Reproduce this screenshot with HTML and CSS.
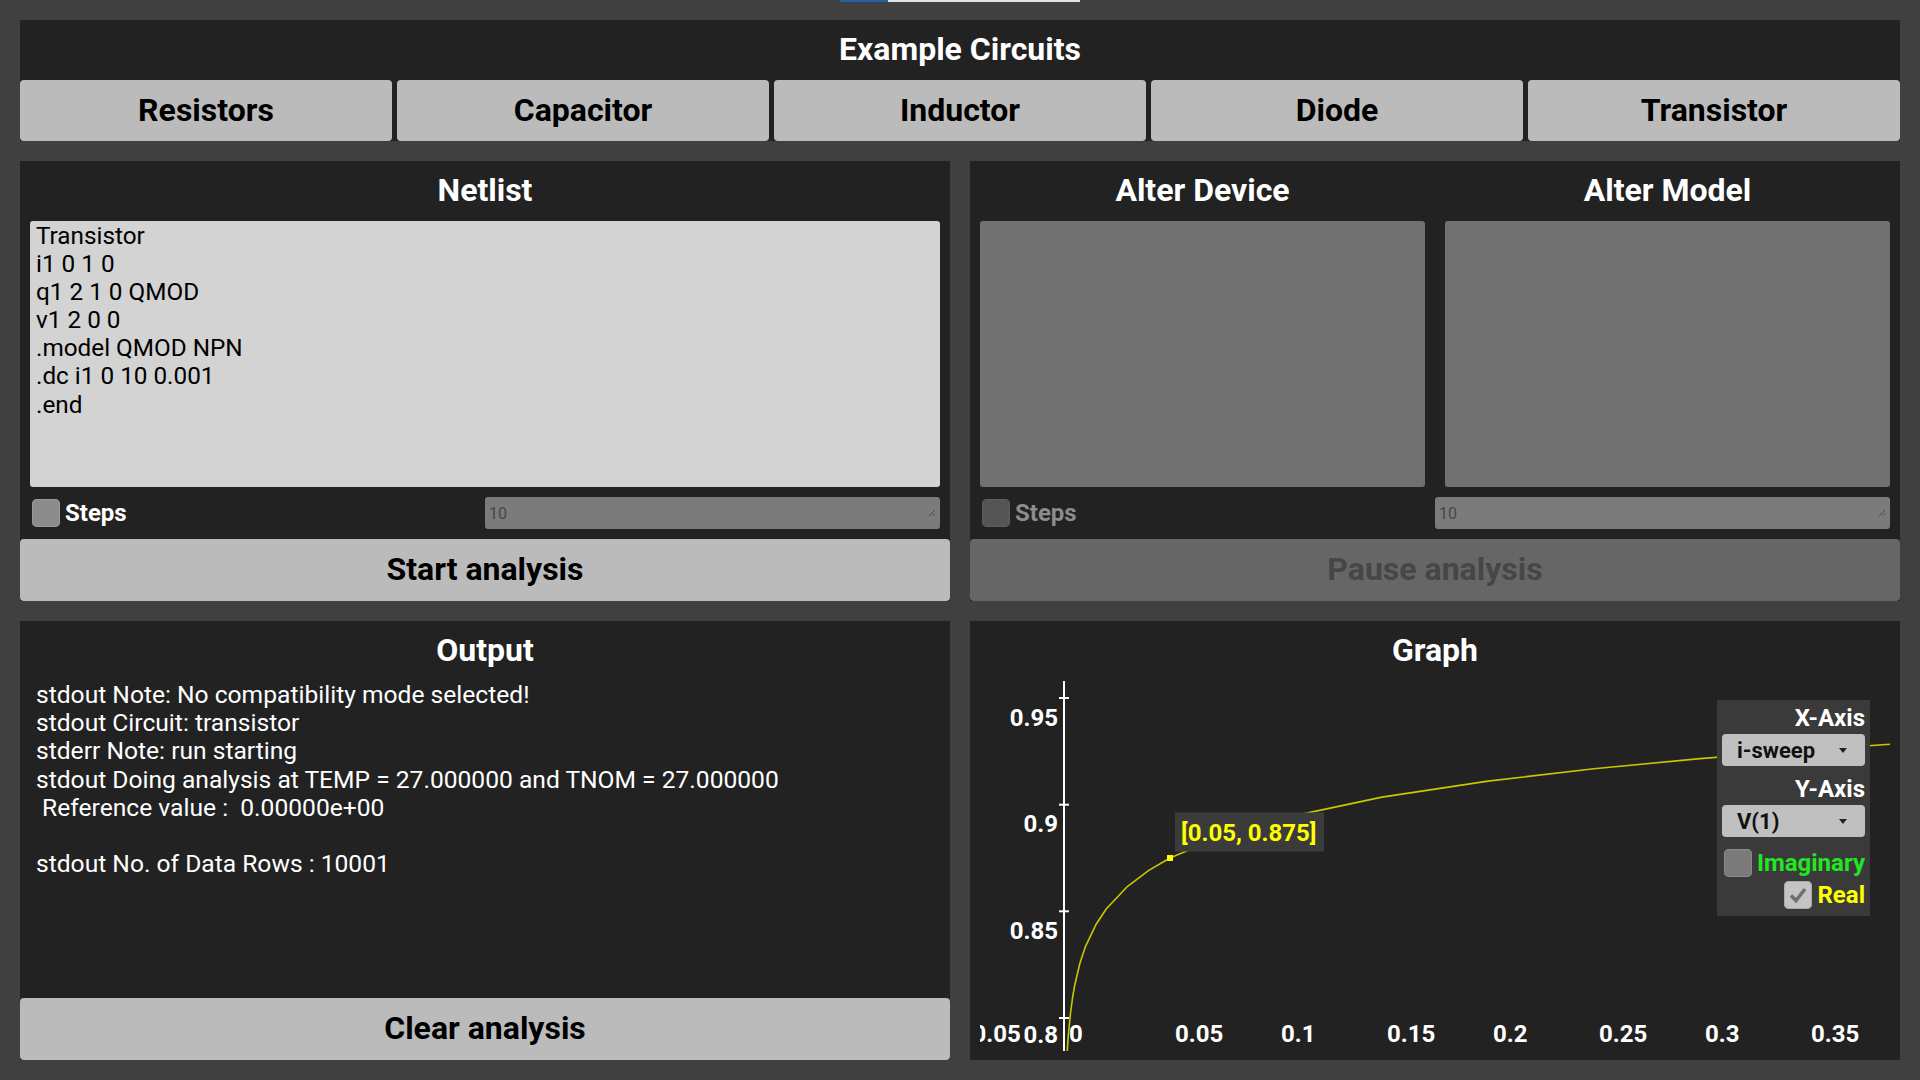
FILE: index.html
```html
<!DOCTYPE html>
<html lang="en">
<head>
  <meta charset="UTF-8">
  <title>Circuit Simulator</title>
  <link rel="stylesheet" href="styles.css">
</head>
<body>

  <div class="loader"><div class="loader-bar"></div></div>

  <main class="app">
    <section class="panel examples">
      <h2 class="panel-title">Example Circuits</h2>
      <div class="example-buttons">
        <button class="btn">Resistors</button>
        <button class="btn">Capacitor</button>
        <button class="btn">Inductor</button>
        <button class="btn">Diode</button>
        <button class="btn">Transistor</button>
      </div>
    </section>

    <div class="row">
      <section class="panel netlist">
        <h2 class="panel-title">Netlist</h2>
        <textarea class="netlist-text" spellcheck="false">Transistor
i1 0 1 0
q1 2 1 0 QMOD
v1 2 0 0
.model QMOD NPN
.dc i1 0 10 0.001
.end</textarea>
        <div class="steps-row">
          <label class="steps"><span class="check"></span>Steps</label>
          <div class="steps-input">
            <span>10</span>
            <svg class="grip" width="8" height="8" viewBox="0 0 8 8"><path d="M7 1 L1 7 M7 4.5 L4.5 7" stroke="#4a4a4a" stroke-width="1"/></svg>
          </div>
        </div>
        <button class="btn btn-wide">Start analysis</button>
      </section>

      <section class="panel alter">
        <div class="alter-cols">
          <div class="alter-col">
            <h2 class="panel-title">Alter Device</h2>
            <div class="alter-box"></div>
          </div>
          <div class="alter-col">
            <h2 class="panel-title">Alter Model</h2>
            <div class="alter-box"></div>
          </div>
        </div>
        <div class="steps-row">
          <label class="steps"><span class="check"></span>Steps</label>
          <div class="steps-input">
            <span>10</span>
            <svg class="grip" width="8" height="8" viewBox="0 0 8 8"><path d="M7 1 L1 7 M7 4.5 L4.5 7" stroke="#4a4a4a" stroke-width="1"/></svg>
          </div>
        </div>
        <button class="btn btn-wide btn-disabled">Pause analysis</button>
      </section>
    </div>

    <div class="row bottom">
      <section class="panel output">
        <h2 class="panel-title">Output</h2>
        <pre class="log">stdout Note: No compatibility mode selected!
stdout Circuit: transistor
stderr Note: run starting
stdout Doing analysis at TEMP = 27.000000 and TNOM = 27.000000
 Reference value :  0.00000e+00

stdout No. of Data Rows : 10001</pre>
        <button class="btn btn-wide">Clear analysis</button>
      </section>

      <section class="panel graph">
        <h2 class="panel-title">Graph</h2>
        <div class="plot">
          <svg class="plot-svg" width="910" height="370" viewBox="0 0 910 370">
            <line x1="84" y1="0" x2="84" y2="370" stroke="#fff" stroke-width="2"/>
            <g stroke="#fff" stroke-width="2">
              <line x1="79" y1="17" x2="89" y2="17"/>
              <line x1="79" y1="123.7" x2="89" y2="123.7"/>
              <line x1="79" y1="230.3" x2="89" y2="230.3"/>
              <line x1="79" y1="337" x2="89" y2="337"/>
            </g>
            <g class="tick-label" text-anchor="end">
              <text x="78" y="45">0.95</text>
              <text x="78" y="151">0.9</text>
              <text x="78" y="257.5">0.85</text>
              <text x="78" y="362">0.8</text>
            </g>
            <g class="tick-label">
              <text x="-17" y="361">-0.05</text>
              <text x="89" y="361">0</text>
              <text x="195" y="361">0.05</text>
              <text x="301" y="361">0.1</text>
              <text x="407" y="361">0.15</text>
              <text x="513" y="361">0.2</text>
              <text x="619" y="361">0.25</text>
              <text x="725" y="361">0.3</text>
              <text x="831" y="361">0.35</text>
            </g>
            <polyline class="curve" points="86.1,394 86.5,383.8 87.4,367.9 88.2,355.5 90.4,333 92.5,317.1 94.6,304.7 99.9,282.2 105.2,266.2 115.8,243.8 126.4,227.8 147.6,205.3 168.8,189.4 190,177 243,154.5 296,138.6 402,116.1 508,100.1 614,87.8 720,77.6 826,69.1 932,61.7"/>
            <rect x="187" y="174" width="6" height="6" fill="#ffff00"/>
            <rect x="195" y="131.5" width="149" height="39" fill="#3b3b3b"/>
            <text class="tip-text" x="201" y="160">[0.05, 0.875]</text>
          </svg>

          <div class="legend">
            <div class="legend-label">X-Axis</div>
            <div class="legend-select"><span>i-sweep</span><span class="arrow"></span></div>
            <div class="legend-label y-label">Y-Axis</div>
            <div class="legend-select"><span>V(1)</span><span class="arrow"></span></div>
            <label class="legend-check imaginary"><span class="check"></span>Imaginary</label>
            <label class="legend-check real">
              <span class="check checked">
                <svg width="20" height="20" viewBox="0 0 20 20"><path d="M3 10.5 L8 15.5 L17 4" fill="none" stroke="#6f6f6f" stroke-width="3.5"/></svg>
              </span>Real
            </label>
          </div>
        </div>
      </section>
    </div>
  </main>

</body>
</html>
```

FILE: styles.css
```css
* {
  box-sizing: border-box;
}

body {
  margin: 0;
  width: 1920px;
  height: 1080px;
  overflow: hidden;
  background: #404040;
  font-family: Roboto, "Noto Sans", sans-serif;
  color: #fff;
}

.loader {
  height: 20px;
}

.loader-bar {
  width: 240px;
  height: 2px;
  margin: 0 auto;
  background: linear-gradient(to right, #2462a8 48px, #e4e4e4 48px);
}

.app {
  padding: 0 20px;
  display: flex;
  flex-direction: column;
  gap: 20px;
}

.panel {
  background: #222;
  display: flex;
  flex-direction: column;
}

.panel-title {
  margin: 0;
  height: 60px;
  line-height: 58px;
  font-size: 32px;
  font-weight: 700;
  text-align: center;
}

.examples {
  height: 121px;
}

.example-buttons {
  display: grid;
  grid-template-columns: repeat(5, 1fr);
  gap: 5px;
}

.btn {
  height: 62px;
  padding: 0 0 2px;
  border: none;
  border-radius: 4px;
  background: #bbb;
  color: #000;
  font-family: inherit;
  font-size: 32px;
  font-weight: 700;
  cursor: pointer;
}

.example-buttons .btn {
  height: 61px;
}

.btn-disabled {
  background: #666;
  color: #464646;
  cursor: default;
}

.row {
  display: grid;
  grid-template-columns: 1fr 1fr;
  gap: 20px;
}

.row .panel {
  height: 440px;
}

.row.bottom .panel {
  height: 439px;
}

/* netlist */

.netlist-text {
  display: block;
  height: 266px;
  margin: 0 10px;
  padding: 1px 6px;
  border: none;
  border-radius: 3px;
  background: #d3d3d3;
  color: #000;
  font-family: inherit;
  font-size: 24.3px;
  line-height: 28.1px;
  resize: none;
  overflow: hidden;
}

.steps-row {
  height: 52px;
  display: grid;
  grid-template-columns: 1fr 1fr;
  align-items: center;
}

.steps {
  display: flex;
  align-items: center;
  gap: 5px;
  padding-left: 12px;
  padding-bottom: 1px;
  font-size: 24px;
  font-weight: 700;
}

.check {
  width: 28px;
  height: 28px;
  border-radius: 5px;
  background: #8c8c8c;
  box-shadow: inset 0 0 0 1px #999;
  display: flex;
  align-items: center;
  justify-content: center;
}

.steps-input {
  height: 32px;
  margin-right: 10px;
  padding: 0 4px;
  border-radius: 3px;
  background: #7b7b7b;
  color: #474747;
  font-size: 16px;
  display: flex;
  align-items: center;
  justify-content: space-between;
}

/* alter */

.alter-cols {
  display: grid;
  grid-template-columns: 1fr 1fr;
}

.alter-col {
  padding: 0 10px;
}

.alter-box {
  height: 266px;
  border-radius: 3px;
  background: #717171;
}

.alter .steps {
  color: #8c8c8c;
}

.alter .check {
  background: #555;
  box-shadow: inset 0 0 0 1px #5e5e5e;
}

/* output */

.log {
  flex: 1;
  margin: 0;
  padding: 0 16px;
  font-family: inherit;
  font-size: 24.6px;
  line-height: 28.2px;
  white-space: pre;
}

/* graph */

.plot {
  position: relative;
  height: 370px;
  margin: 0 10px;
  overflow: hidden;
}

.plot-svg {
  display: block;
}

.tick-label {
  fill: #fff;
  font-family: Roboto, sans-serif;
  font-size: 24px;
  font-weight: 700;
}

.curve {
  fill: none;
  stroke: #c8c800;
  stroke-width: 1.6;
  stroke-linejoin: round;
}

.tip-text {
  fill: #ffff00;
  font-family: Roboto, sans-serif;
  font-size: 24px;
  font-weight: 700;
}

.legend {
  position: absolute;
  top: 19px;
  right: 20px;
  width: 153px;
  padding: 4px 5px 7px;
  background: #3a3a3a;
  display: flex;
  flex-direction: column;
}

.legend-label {
  height: 28px;
  line-height: 28px;
  text-align: right;
  font-size: 24px;
  font-weight: 700;
}

.legend-label.y-label {
  margin-top: 9px;
}

.legend-select {
  height: 32px;
  margin-top: 2px;
  padding: 0 18px 0 15px;
  border-radius: 4px;
  background: #c0c0c0;
  color: #111;
  font-size: 22px;
  font-weight: 700;
  display: flex;
  align-items: center;
  justify-content: space-between;
}

.arrow {
  width: 0;
  height: 0;
  border-left: 4px solid transparent;
  border-right: 4px solid transparent;
  border-top: 5px solid #222;
}

.legend-check {
  height: 28px;
  display: flex;
  align-items: center;
  justify-content: flex-end;
  gap: 5px;
  font-size: 24px;
  font-weight: 700;
}

.legend-check.imaginary {
  margin-top: 12px;
  color: #22e622;
}

.legend-check.imaginary .check {
  background: #7a7a7a;
  box-shadow: inset 0 0 0 1px #8a8a8a;
}

.legend-check.real {
  margin-top: 4px;
  color: #ffff00;
}

.check.checked {
  background: #c4c4c4;
  box-shadow: inset 0 0 0 1px #aaa;
}
```
